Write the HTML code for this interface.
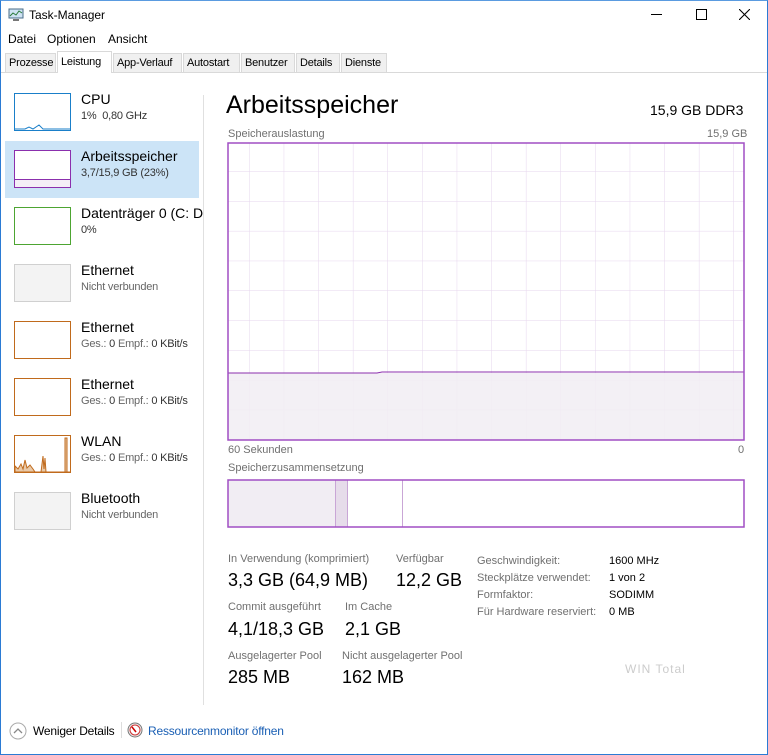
<!DOCTYPE html>
<html><head><meta charset="utf-8"><style>
*{margin:0;padding:0;box-sizing:border-box}
body{width:768px;height:755px;background:#fff;font-family:"Liberation Sans",sans-serif;position:relative;overflow:hidden;color:#000}
.a{position:absolute;white-space:nowrap}
.win{position:absolute;left:0;top:0;width:768px;height:755px;border:1px solid #2b7bd4;border-top-color:#5a9be0}
.tab{position:absolute;top:53px;height:19px;font-size:11px;padding:3px 3px;background:#f0f0f0;border:1px solid #d9d9d9;border-bottom:none;color:#000;white-space:nowrap;overflow:hidden;letter-spacing:-0.2px}
.thumb{position:absolute;left:14px;width:57px;height:38px;border:1px solid}
.t1{font-size:14px;left:81px}
.t2{font-size:11px;left:81px;color:#333;letter-spacing:-0.2px}
.g{color:#666}
.lbl{font-size:11px;color:#707070}
.big{font-size:18px;color:#000}
.sm{font-size:11px;color:#707070}
</style></head><body>
<div class="win"></div>
<svg class="a" style="left:8px;top:8px" width="16" height="14"><rect x="1" y="1" width="14" height="9" fill="#cfe3f3" stroke="#4a6d8a"/><polyline points="2,8 5,5 8,7 11,3 14,5" fill="none" stroke="#2a7a3a"/><rect x="5" y="11" width="6" height="2" fill="#777"/></svg>
<div class="a" style="left:29px;top:8px;font-size:12px">Task-Manager</div>
<div class="a" style="left:651px;top:14px;width:11px;height:1px;background:#000"></div>
<div class="a" style="left:696px;top:9px;width:11px;height:11px;border:1px solid #000"></div>
<svg class="a" style="left:739px;top:9px" width="11" height="11"><path d="M0 0L11 11M11 0L0 11" stroke="#000" stroke-width="1.1"/></svg>
<div class="a" style="left:8px;top:32px;font-size:12px">Datei</div>
<div class="a" style="left:47px;top:32px;font-size:12px">Optionen</div>
<div class="a" style="left:108px;top:32px;font-size:12px">Ansicht</div>
<div class="a" style="left:1px;top:72px;width:766px;height:1px;background:#d9d9d9"></div>
<div class="tab" style="left:5px;width:51px">Prozesse</div>
<div class="tab" style="left:57px;top:51px;height:22px;width:55px;background:#fff;padding-top:4px">Leistung</div>
<div class="tab" style="left:113px;width:69px">App-Verlauf</div>
<div class="tab" style="left:183px;width:57px">Autostart</div>
<div class="tab" style="left:241px;width:54px">Benutzer</div>
<div class="tab" style="left:296px;width:44px">Details</div>
<div class="tab" style="left:341px;width:46px">Dienste</div>
<div class="a" style="left:203px;top:95px;width:1px;height:610px;background:#e0e0e0"></div>
<div class="a" style="left:5px;top:141px;width:194px;height:57px;background:#cce4f7"></div>
<div class="thumb" style="top:93px;border-color:#1a7fc9;background:#fff"><svg width="55" height="36"><polyline points="0,35 10,35 14,33 18,35 24,31 28,35 55,35" fill="none" stroke="#1a7fc9"/></svg></div>
<div class="a t1" style="top:91px">CPU</div><div class="a t2" style="top:110px">1%&nbsp; 0,80 GHz</div>
<div class="thumb" style="top:150px;border-color:#8b2fad;background:#fff"><div style="position:absolute;left:0;right:0;bottom:0;height:8px;background:#f4eef6;border-top:1px solid #8b2fad"></div></div>
<div class="a t1" style="top:148px">Arbeitsspeicher</div><div class="a t2" style="top:167px">3,7/15,9 GB (23%)</div>
<div class="thumb" style="top:207px;border-color:#4da532;background:#fff"></div>
<div class="a t1" style="top:205px">Datenträger 0 (C: D</div><div class="a t2" style="top:224px">0%</div>
<div class="thumb" style="top:264px;border-color:#d0d0d0;background:#f3f3f3"></div>
<div class="a t1" style="top:262px">Ethernet</div><div class="a t2 g" style="top:281px">Nicht verbunden</div>
<div class="thumb" style="top:321px;border-color:#c06a1c;background:#fff"></div>
<div class="a t1" style="top:319px">Ethernet</div><div class="a t2" style="top:338px"><span class="g">Ges.:</span> 0 <span class="g">Empf.:</span> 0 KBit/s</div>
<div class="thumb" style="top:378px;border-color:#c06a1c;background:#fff"></div>
<div class="a t1" style="top:376px">Ethernet</div><div class="a t2" style="top:395px"><span class="g">Ges.:</span> 0 <span class="g">Empf.:</span> 0 KBit/s</div>
<div class="thumb" style="top:435px;border-color:#c06a1c;background:#fff"><svg width="55" height="36"><polygon points="0,36 0,30 3,33 6,28 8,33 10,24 12,32 15,29 18,33 20,36 26,36 27,28 28,20 29,33 30,22 31,36 50,36 50,2 52,2 52,36 55,36" fill="#e9c9a8" stroke="#c06a1c" stroke-width="1"/></svg></div>
<div class="a t1" style="top:433px">WLAN</div><div class="a t2" style="top:452px"><span class="g">Ges.:</span> 0 <span class="g">Empf.:</span> 0 KBit/s</div>
<div class="thumb" style="top:492px;border-color:#d0d0d0;background:#f3f3f3"></div>
<div class="a t1" style="top:490px">Bluetooth</div><div class="a t2 g" style="top:509px">Nicht verbunden</div>
<div class="a" style="left:226px;top:91px;font-size:25px">Arbeitsspeicher</div>
<div class="a" style="left:650px;top:102px;font-size:14px">15,9 GB DDR3</div>
<div class="a lbl" style="left:228px;top:128px">Speicherauslastung</div>
<div class="a lbl" style="left:707px;top:128px">15,9 GB</div>
<svg class="a" style="left:227px;top:142px" width="518" height="299">
<defs><pattern id="p" x="-12" y="0" width="34.6" height="29.8" patternUnits="userSpaceOnUse"><path d="M34.6 0V29.8M0 29.8H34.6" fill="none" stroke="#e6d6ed" stroke-width="1"/></pattern></defs>
<rect x="1" y="1" width="516" height="297" fill="url(#p)"/>
<rect x="1" y="231" width="516" height="67" fill="#f1edf3" opacity="0.85"/>
<polyline points="1,231 150,231 155,230 517,230" fill="none" stroke="#8b2fad" stroke-width="1"/>
<rect x="1" y="1" width="516" height="297" fill="none" stroke="#a04ec4" stroke-width="1.5"/>
</svg>
<div class="a lbl" style="left:228px;top:444px">60 Sekunden</div>
<div class="a lbl" style="left:738px;top:444px">0</div>
<div class="a lbl" style="left:228px;top:462px">Speicherzusammensetzung</div>
<svg class="a" style="left:227px;top:479px" width="518" height="49">
<rect x="1" y="1" width="108" height="47" fill="#f1edf3"/>
<rect x="108" y="1" width="12" height="47" fill="#e6dcea"/>
<line x1="108.5" y1="1" x2="108.5" y2="48" stroke="#c9a6d6"/>
<line x1="120.5" y1="1" x2="120.5" y2="48" stroke="#c9a6d6"/>
<line x1="175.5" y1="1" x2="175.5" y2="48" stroke="#c9a6d6"/>
<rect x="1" y="1" width="516" height="47" fill="none" stroke="#a04ec4" stroke-width="1.5"/>
</svg>
<div class="a sm" style="left:228px;top:553px">In Verwendung (komprimiert)</div>
<div class="a big" style="left:228px;top:570px">3,3 GB (64,9 MB)</div>
<div class="a sm" style="left:396px;top:553px">Verfügbar</div>
<div class="a big" style="left:396px;top:570px">12,2 GB</div>
<div class="a sm" style="left:228px;top:601px">Commit ausgeführt</div>
<div class="a big" style="left:228px;top:619px">4,1/18,3 GB</div>
<div class="a sm" style="left:345px;top:601px">Im Cache</div>
<div class="a big" style="left:345px;top:619px">2,1 GB</div>
<div class="a sm" style="left:228px;top:650px">Ausgelagerter Pool</div>
<div class="a big" style="left:228px;top:667px">285 MB</div>
<div class="a sm" style="left:342px;top:650px">Nicht ausgelagerter Pool</div>
<div class="a big" style="left:342px;top:667px">162 MB</div>
<div class="a sm" style="left:477px;top:553px;line-height:17px">Geschwindigkeit:<br>Steckplätze verwendet:<br>Formfaktor:<br>Für Hardware reserviert:</div>
<div class="a" style="left:609px;top:553px;line-height:17px;font-size:11px">1600 MHz<br>1 von 2<br>SODIMM<br>0 MB</div>
<div class="a" style="left:625px;top:662px;font-size:12px;color:#ccc;letter-spacing:1px">WIN Total</div>
<svg class="a" style="left:9px;top:722px" width="18" height="18"><circle cx="9" cy="9" r="8" fill="#fff" stroke="#aaa"/><polyline points="5,11 9,7 13,11" fill="none" stroke="#888" stroke-width="1.3"/></svg>
<div class="a" style="left:33px;top:724px;font-size:12px;letter-spacing:-0.2px">Weniger Details</div>
<div class="a" style="left:121px;top:722px;width:1px;height:16px;background:#ddd"></div>
<svg class="a" style="left:127px;top:722px" width="16" height="16"><circle cx="8" cy="8" r="7" fill="#eee" stroke="#777"/><circle cx="8" cy="8" r="5" fill="#fff" stroke="#c33"/><line x1="5" y1="5" x2="9" y2="10" stroke="#c00" stroke-width="1.5"/></svg>
<div class="a" style="left:148px;top:724px;font-size:12px;color:#1a5fb4;letter-spacing:-0.2px">Ressourcenmonitor öffnen</div>
</body></html>
